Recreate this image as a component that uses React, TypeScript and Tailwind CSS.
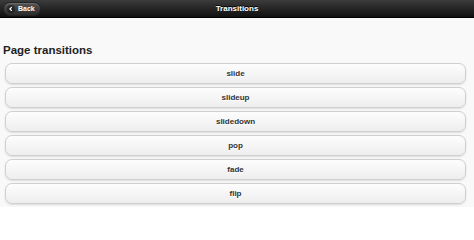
const TRANSITIONS = ["slide", "slideup", "slidedown", "pop", "fade", "flip"];

function BackButton() {
  return (
    <button className="flex h-[14px] items-center gap-[3px] rounded-full border border-[#222] bg-gradient-to-b from-[#555] to-[#2a2a2a] pl-[3px] pr-[5px] text-[7px] font-bold text-white shadow-[inset_0_1px_0_rgba(255,255,255,0.15)]">
      <span className="flex h-[8px] w-[8px] items-center justify-center rounded-full bg-black/40">
        <svg viewBox="0 0 8 8" className="h-[6px] w-[6px]">
          <path d="M5 1.5 L2.5 4 L5 6.5" fill="none" stroke="white" strokeWidth="1.6" />
        </svg>
      </span>
      Back
    </button>
  );
}

export default function App() {
  return (
    <div className="h-[207px] w-[474px] overflow-hidden bg-[#f9f9f9] font-['Liberation_Sans',Arial,sans-serif]">
      <header className="relative flex h-[18px] items-center justify-center border-b border-[#000] bg-gradient-to-b from-[#3c3c3c] to-[#111]">
        <div className="absolute left-[3px] top-[2px]">
          <BackButton />
        </div>
        <h1 className="text-[8px] font-bold text-white [text-shadow:0_-1px_0_#000]">Transitions</h1>
      </header>
      <div className="px-[5px] pt-[24px]">
        <h2 className="-ml-[2px] text-[11.5px] font-bold leading-[16px] text-[#222]">Page transitions</h2>
        <div className="mt-[5px] flex flex-col gap-[3px] pr-[3px]">
          {TRANSITIONS.map((t) => (
            <button
              key={t}
              className="flex h-[21px] items-center justify-center rounded-[7px] border border-[#cfcfcf] bg-gradient-to-b from-[#fdfdfd] to-[#eeeeee] pt-[1px] text-[8px] font-bold text-[#333] shadow-[0_1px_2px_rgba(0,0,0,0.12)] [text-shadow:0_1px_0_#fff]"
            >
              {t}
            </button>
          ))}
        </div>
      </div>
    </div>
  );
}
